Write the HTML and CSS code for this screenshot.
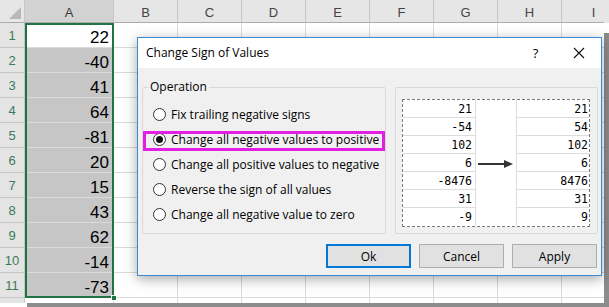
FILE: index.html
```html
<!DOCTYPE html>
<html>
<head>
<meta charset="utf-8">
<link rel="stylesheet" href="styles.css">
</head>
<body>
<div class="screen">
  <div class="sheet">
    <div class="col rhcol">
      <div class="corner"><span class="tri"></span></div>
      <div class="rh">1</div><div class="rh">2</div><div class="rh">3</div><div class="rh">4</div><div class="rh">5</div><div class="rh">6</div><div class="rh">7</div><div class="rh">8</div><div class="rh">9</div><div class="rh">10</div><div class="rh">11</div><div class="rh"></div>
    </div>
    <div class="col acol">
      <div class="ch sel">A</div>
      <div class="selwrap">
        <div class="c a first">22</div>
        <div class="c a">-40</div>
        <div class="c a">41</div>
        <div class="c a">64</div>
        <div class="c a">-81</div>
        <div class="c a">20</div>
        <div class="c a">15</div>
        <div class="c a">43</div>
        <div class="c a">62</div>
        <div class="c a">-14</div>
        <div class="c a">-73</div>
        <span class="handle"></span>
      </div>
      <div class="c"></div>
    </div>
    <div class="col"><div class="ch">B</div><div class="c"></div><div class="c"></div><div class="c"></div><div class="c"></div><div class="c"></div><div class="c"></div><div class="c"></div><div class="c"></div><div class="c"></div><div class="c"></div><div class="c"></div><div class="c"></div></div>
    <div class="col"><div class="ch">C</div><div class="c"></div><div class="c"></div><div class="c"></div><div class="c"></div><div class="c"></div><div class="c"></div><div class="c"></div><div class="c"></div><div class="c"></div><div class="c"></div><div class="c"></div><div class="c"></div></div>
    <div class="col"><div class="ch">D</div><div class="c"></div><div class="c"></div><div class="c"></div><div class="c"></div><div class="c"></div><div class="c"></div><div class="c"></div><div class="c"></div><div class="c"></div><div class="c"></div><div class="c"></div><div class="c"></div></div>
    <div class="col"><div class="ch">E</div><div class="c"></div><div class="c"></div><div class="c"></div><div class="c"></div><div class="c"></div><div class="c"></div><div class="c"></div><div class="c"></div><div class="c"></div><div class="c"></div><div class="c"></div><div class="c"></div></div>
    <div class="col"><div class="ch">F</div><div class="c"></div><div class="c"></div><div class="c"></div><div class="c"></div><div class="c"></div><div class="c"></div><div class="c"></div><div class="c"></div><div class="c"></div><div class="c"></div><div class="c"></div><div class="c"></div></div>
    <div class="col"><div class="ch">G</div><div class="c"></div><div class="c"></div><div class="c"></div><div class="c"></div><div class="c"></div><div class="c"></div><div class="c"></div><div class="c"></div><div class="c"></div><div class="c"></div><div class="c"></div><div class="c"></div></div>
    <div class="col"><div class="ch">H</div><div class="c"></div><div class="c"></div><div class="c"></div><div class="c"></div><div class="c"></div><div class="c"></div><div class="c"></div><div class="c"></div><div class="c"></div><div class="c"></div><div class="c"></div><div class="c"></div></div>
    <div class="col"><div class="ch">I</div><div class="c"></div><div class="c"></div><div class="c"></div><div class="c"></div><div class="c"></div><div class="c"></div><div class="c"></div><div class="c"></div><div class="c"></div><div class="c"></div><div class="c"></div><div class="c"></div></div>
  </div>
  <div class="edge-r"></div>
  <div class="edge-b"></div>
  <div class="edge-c"></div>

  <div class="dialog">
    <div class="titlebar">
      <div class="title">Change Sign of Values</div>
      <div class="tbtn help">?</div>
      <div class="tbtn close">
        <svg width="12" height="12" viewBox="0 0 12 12"><path d="M1 1 L11 11 M11 1 L1 11" stroke="#111" stroke-width="1.1" fill="none"/></svg>
      </div>
    </div>
    <div class="body">
      <div class="top">
        <fieldset class="group">
          <legend>Operation</legend>
          <div class="opts">
            <div class="opt"><span class="radio"></span><span>Fix trailing negative signs</span></div>
            <div class="opt hl"><span class="radio on"></span><span>Change all negative values to positive</span></div>
            <div class="opt"><span class="radio"></span><span>Change all positive values to negative</span></div>
            <div class="opt"><span class="radio"></span><span>Reverse the sign of all values</span></div>
            <div class="opt"><span class="radio"></span><span>Change all negative value to zero</span></div>
          </div>
        </fieldset>
        <div class="preview">
          <div class="ptable">
            <div class="pcol">
              <div class="pc">21</div><div class="pc">-54</div><div class="pc">102</div><div class="pc">6</div><div class="pc">-8476</div><div class="pc">31</div><div class="pc">-9</div>
            </div>
            <div class="pmid">
              <svg width="36" height="10" viewBox="0 0 36 10"><path d="M0 5 H28" stroke="#333" stroke-width="2"/><path d="M26 1 L35 5 L26 9 Z" fill="#333"/></svg>
            </div>
            <div class="pcol right">
              <div class="pc">21</div><div class="pc">54</div><div class="pc">102</div><div class="pc">6</div><div class="pc">8476</div><div class="pc">31</div><div class="pc">9</div>
            </div>
          </div>
        </div>
      </div>
      <div class="buttons">
        <button class="btn default">Ok</button>
        <button class="btn">Cancel</button>
        <button class="btn">Apply</button>
      </div>
    </div>
  </div>
</div>
</body>
</html>
```

FILE: styles.css
```css
* { box-sizing: border-box; }
html, body { margin: 0; padding: 0; background: #fff; }
.screen {
  position: relative;
  width: 609px;
  height: 307px;
  overflow: hidden;
  display: grid;
  grid-template-columns: 604px 5px;
  grid-template-rows: 303px 4px;
  background: #fff;
}
.sheet {
  display: flex;
  overflow: hidden;
  font-family: "Liberation Sans", Arial, sans-serif;
}
.col {
  display: flex;
  flex-direction: column;
  width: 64px;
  flex: none;
}
.rhcol { width: 25px; }
.acol { width: 89px; }
.edge-r { background: linear-gradient(to bottom, #e6e6e6 0, #e6e6e6 23px, #fff 23px, #fff 33px, #8c8c8c 33px); }
.edge-b { background: linear-gradient(to right, #fff 0, #fff 27px, #8c8c8c 27px); }
.edge-c { background: #8c8c8c; }

.corner {
  height: 23px;
  flex: none;
  background: #e6e6e6;
  border-right: 1px solid #c6c6c6;
  border-bottom: 1px solid #ababab;
  position: relative;
}
.tri {
  position: absolute;
  right: 3px;
  bottom: 3px;
  width: 0; height: 0;
  border-left: 12px solid transparent;
  border-bottom: 12px solid #b8b8b8;
}
.ch {
  height: 23px;
  flex: none;
  background: #e6e6e6;
  border-right: 1px solid #c6c6c6;
  border-bottom: 1px solid #ababab;
  color: #444;
  font-size: 13px;
  display: flex;
  align-items: center;
  justify-content: center;
  padding-top: 2px;
}
.ch.sel { background: #d2d2d2; color: #3a3a3a; }
.rh {
  height: 25px;
  flex: none;
  background: #e4e4e4;
  border-right: 1px solid #c6c6c6;
  border-bottom: 1px solid #c6c6c6;
  color: #3b7a57;
  font-size: 13px;
  display: flex;
  align-items: flex-end;
  justify-content: center;
  padding-bottom: 4px;
}
.c {
  height: 25px;
  flex: none;
  border-right: 1px solid #dadada;
  border-bottom: 1px solid #dadada;
  background: #fff;
}
.selwrap {
  display: flex;
  flex-direction: column;
  position: relative;
  outline: 2px solid #217346;
  outline-offset: -2px;
}
.c.a {
  background: #c6c6c6;
  font-size: 17px;
  color: #000;
  display: flex;
  align-items: flex-end;
  justify-content: flex-end;
  padding-right: 4px;
  line-height: 19px;
}
.c.a.first { background: #fff; }
.handle {
  position: absolute;
  right: -3px;
  bottom: -3px;
  width: 6px;
  height: 6px;
  background: #217346;
  border: 1px solid #fff;
}

/* dialog */
.dialog {
  position: absolute;
  left: 137px;
  top: 37px;
  width: 465px;
  height: 239px;
  border: 1px solid #3a8ad6;
  background: #f0f0f0;
  box-shadow: 0 3px 12px rgba(0,0,0,0.35);
  display: flex;
  flex-direction: column;
  font-family: "Open Sans", "Noto Sans", sans-serif;
  font-size: 12px;
  color: #000;
}
.titlebar {
  height: 30px;
  background: #fff;
  display: flex;
  align-items: center;
}
.title { flex: 1; padding-left: 8px; padding-bottom: 1px; }
.tbtn {
  width: 45px;
  height: 30px;
  display: flex;
  align-items: center;
  justify-content: center;
}
.help { font-size: 13px; padding-left: 4px; }
.body {
  flex: 1;
  padding: 12px 3px 7px 4px;
  display: flex;
  flex-direction: column;
}
.top {
  display: flex;
  align-items: flex-start;
  gap: 9px;
}
.group {
  width: 244px;
  margin: 0;
  padding: 0 0 6px 0;
  border: 1px solid #d9d9d9;
  border-radius: 2px;
  min-inline-size: 0;
}
.group legend {
  margin-left: 5px;
  padding: 0 2px;
  line-height: 14px;
}
.opts { padding-top: 8px; display: flex; flex-direction: column; }
.opt {
  height: 25px;
  display: flex;
  align-items: center;
  gap: 5px;
  padding-left: 10px;
  position: relative;
  white-space: nowrap;
}
.opt.hl::after {
  content: "";
  position: absolute;
  left: 0; right: 0;
  top: 4px; bottom: 1px;
  border: 3px solid #e21fe2;
}
.radio {
  width: 13px;
  height: 13px;
  border: 1px solid #333;
  border-radius: 50%;
  background: #fff;
  display: flex;
  align-items: center;
  justify-content: center;
  flex: none;
}
.radio.on::before {
  content: "";
  width: 7px;
  height: 7px;
  border-radius: 50%;
  background: #111;
}
.preview {
  width: 203px;
  height: 147px;
  margin-top: 7px;
  border: 1px solid #d9d9d9;
  border-radius: 2px;
  padding: 11px 0 0 6px;
}
.ptable {
  width: 188px;
  border: 1px dashed #7a7a7a;
  background: #fff;
  display: grid;
  grid-template-columns: 72px 42px 72px;
}
.pcol { display: flex; flex-direction: column; }
.pc {
  height: 18px;
  border-bottom: 1px solid #dcdcdc;
  text-align: right;
  padding-right: 3px;
  font-family: "DejaVu Sans Mono", "Liberation Mono", monospace;
  font-size: 11.5px;
  line-height: 18px;
  color: #000;
}
.pc:last-child { border-bottom: none; }
.pcol.right .pc { padding-right: 1px; }
.pmid {
  border-left: 1px solid #dcdcdc;
  border-right: 1px solid #dcdcdc;
  display: flex;
  align-items: center;
  justify-content: center;
  padding-top: 1px;
}
.buttons {
  margin-top: 10px;
  display: flex;
  justify-content: flex-end;
  gap: 8px;
  padding-right: 1px;
}
.btn {
  width: 85px;
  height: 24px;
  border: 1px solid #adadad;
  background: #e1e1e1;
  font-family: inherit;
  font-size: 12px;
  color: #000;
  padding: 0;
  margin: 0;
}
.btn.default { border: 2px solid #0078d7; }
```
